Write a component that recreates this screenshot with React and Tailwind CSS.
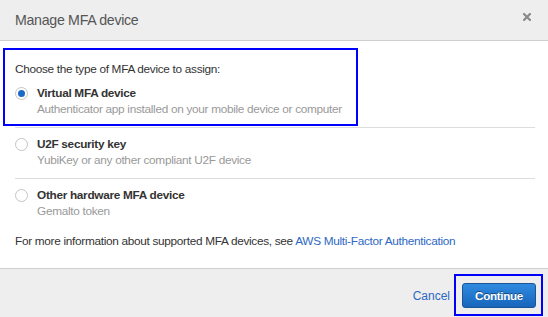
import React, { useState } from 'react'

const options = [
    { id: 'virtual', label: 'Virtual MFA device', desc: 'Authenticator app installed on your mobile device or computer' },
    { id: 'u2f', label: 'U2F security key', desc: 'YubiKey or any other compliant U2F device' },
    { id: 'hardware', label: 'Other hardware MFA device', desc: 'Gemalto token' },
]

function Radio({ checked }) {
    return (
        <span className="flex h-[13px] w-[13px] shrink-0 items-center justify-center rounded-full border border-[#c4c4c4] bg-white">
            {checked && <span className="h-[7px] w-[7px] rounded-full bg-[#1b6ac9]" />}
        </span>
    )
}

export default function App() {
    const [selected, setSelected] = useState('virtual')

    return (
        <div className="relative h-[317px] w-[548px] overflow-hidden bg-white text-[11.8px] tracking-[-0.3px] text-[#333] font-['Liberation_Sans',Arial,sans-serif]">
            {/* Header */}
            <div className="flex h-[41px] items-center justify-between border-b border-[#cfcfcf] bg-[#eeeeee] pl-[15px] pr-[17px]">
                <h2 className="text-[14.2px] tracking-[-0.3px] leading-[20px] text-[#555]">Manage MFA device</h2>
                <svg width="8" height="8" viewBox="0 0 8 8" className="mb-[6px]">
                    <path d="M1 1 L7 7 M7 1 L1 7" stroke="#8a8a8a" strokeWidth="2.2" strokeLinecap="square" />
                </svg>
            </div>

            {/* Body */}
            <div className="px-[15px] pt-[20px] pb-[19px]">
                <p className="leading-[16px]">Choose the type of MFA device to assign:</p>
                <div className="mr-[-2px]">
                    {options.map((opt, i) => (
                        <label
                            key={opt.id}
                            onClick={() => setSelected(opt.id)}
                            className={`flex cursor-pointer gap-[9px] pt-[8px] ${i < options.length - 1 ? 'border-b border-[#dddddd] pb-[10px]' : 'pb-[14px]'}`}
                        >
                            <span className="flex h-[16px] items-center">
                                <Radio checked={selected === opt.id} />
                            </span>
                            <span className="flex flex-col">
                                <span className="font-bold leading-[16px] text-[#333]">{opt.label}</span>
                                <span className="leading-[16px] text-[#999]">{opt.desc}</span>
                            </span>
                        </label>
                    ))}
                </div>
                <p className="leading-[16px]">
                    For more information about supported MFA devices, see{' '}
                    <a href="#" className="text-[#2d68c4]">AWS Multi-Factor Authentication</a>
                </p>
            </div>

            {/* Footer */}
            <div className="flex h-[49px] items-start justify-end gap-[12px] border-t border-[#cfcfcf] bg-[#eeeeee] pt-[14px] pr-[12px]">
                <a href="#" className="mt-[6px] text-[12px] tracking-normal leading-[14px] text-[#2d68c4]">Cancel</a>
                <button className="h-[25px] w-[74px] rounded-[3px] border border-[#1a5596] bg-gradient-to-b from-[#2e8be0] to-[#1865bc] text-[11.6px] tracking-[-0.3px] font-bold text-white [text-shadow:0_-1px_0_rgba(0,0,0,0.45)]">
                    Continue
                </button>
            </div>

            {/* Annotation boxes */}
            <div className="pointer-events-none absolute left-[3px] top-[48px] h-[78px] w-[355px] border-2 border-[#0000ff]" />
            <div className="pointer-events-none absolute left-[454px] top-[274px] h-[42px] w-[89px] border-2 border-[#0000ff]" />
        </div>
    )
}
